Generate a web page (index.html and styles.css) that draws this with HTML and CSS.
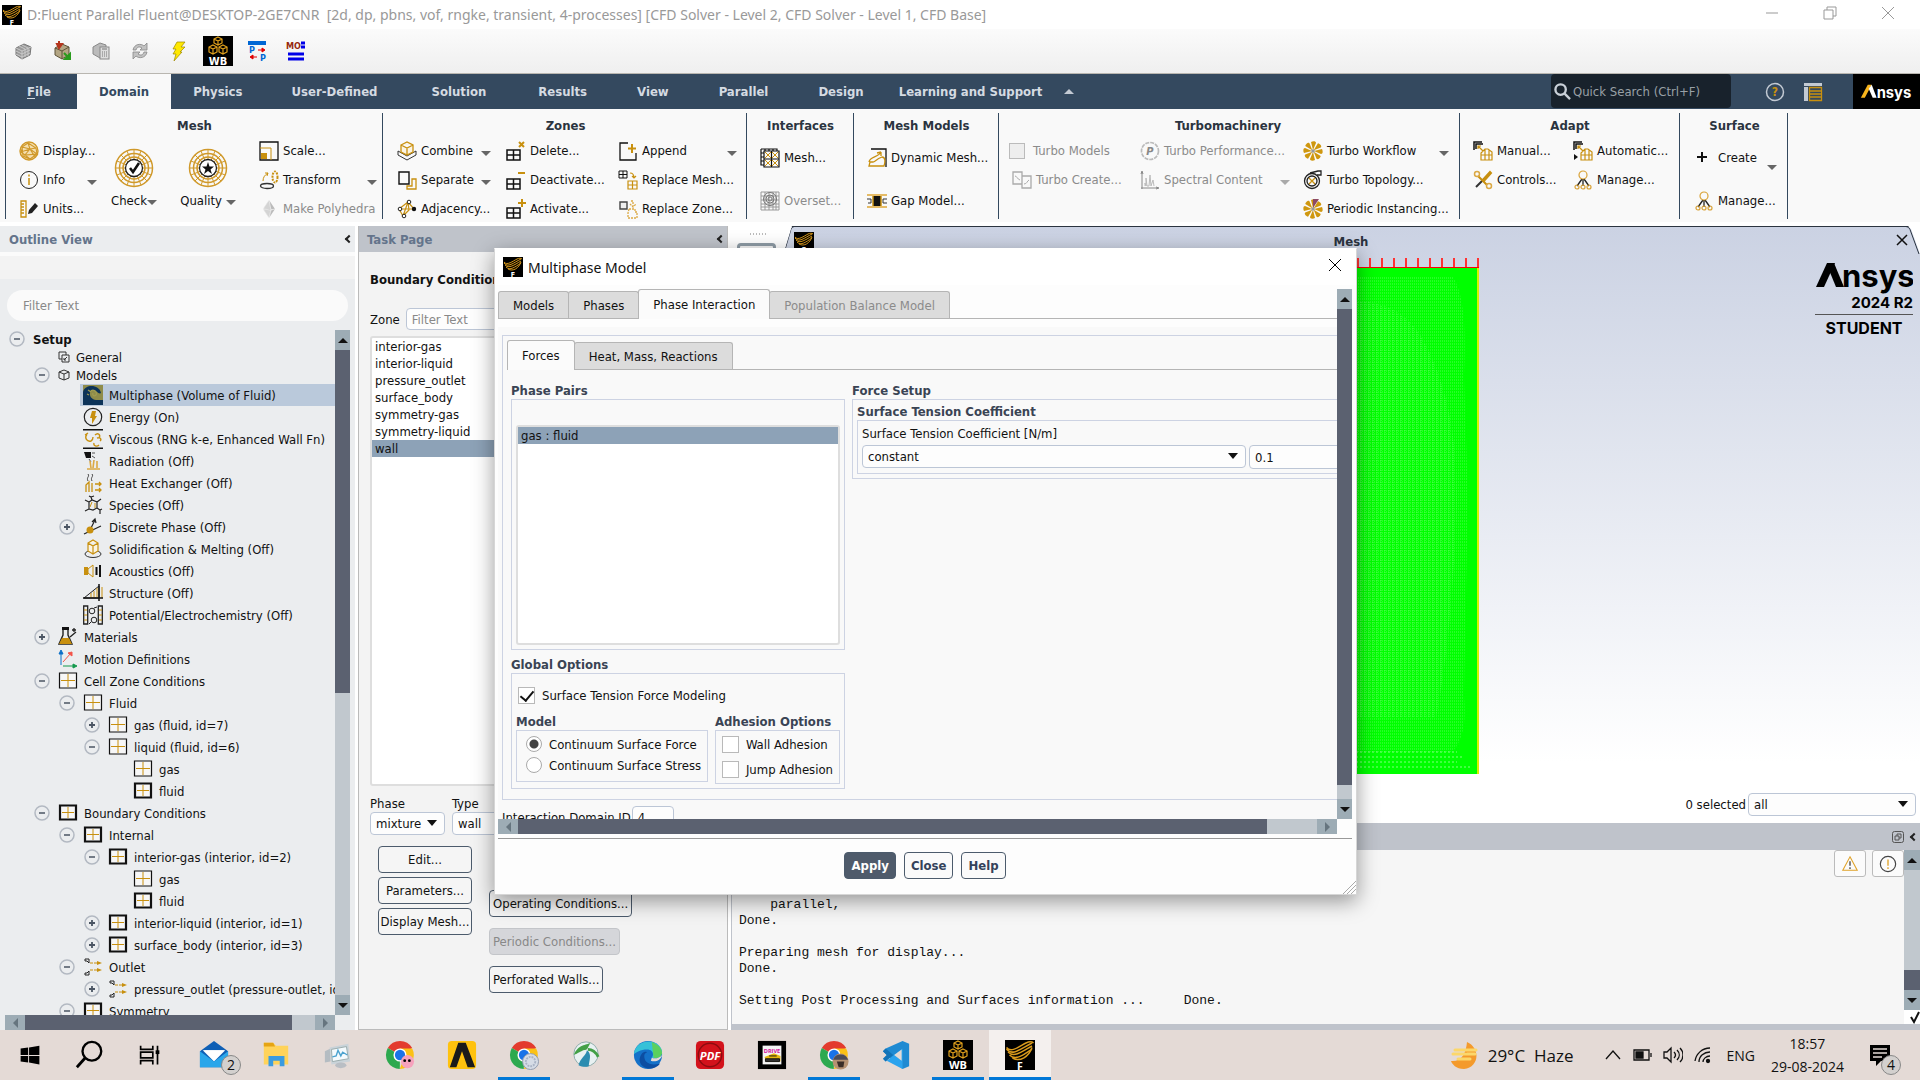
FILE: index.html
```html
<!DOCTYPE html>
<html lang="en">
<head>
  <meta charset="UTF-8">
  <meta name="viewport" content="width=device-width, initial-scale=1.0">
  <title>Fluent Parallel</title>
  <link rel="stylesheet" href="styles.css">
</head>
<body>
  <!-- icon sprite -->
  <svg class="sprite" aria-hidden="true">
    <symbol id="fluent" viewBox="0 0 20 20"><rect width="20" height="20" fill="#000"/><g fill="none" stroke="#d99a1c" stroke-width="1"><path d="M1 5c3 4 9-1 13-3 2-1 4-1 5 0"/><path d="M1 6c4 5 9 0 17-4"/><path d="M2 8c4 4 9 0 16-4"/><path d="M3 10c4 4 9 0 15-4"/><path d="M5 12c5 3 11-1 13-7"/></g><text x="10" y="20" font-size="7" font-weight="700" fill="#fff" text-anchor="middle">F</text></symbol>
    <symbol id="wb" viewBox="0 0 30 30"><rect width="30" height="30" fill="#000"/><g fill="none" stroke="#e0a01c" stroke-width="1.2"><path d="M15 1l4 2v4l-4 2-4-2V3zM11 3l4 2 4-2M15 5v4"/><path d="M10 9l4 2v5l-4 2-4-2v-5zM6 11l4 2 4-2M10 13v5"/><path d="M20 9l4 2v5l-4 2-4-2v-5zM16 11l4 2 4-2M20 13v5"/></g><text x="15" y="29" font-size="11" font-weight="700" fill="#fff" text-anchor="middle">WB</text></symbol>
    <symbol id="cube" viewBox="0 0 20 20"><path d="M3 7l8-4 7 3-1 8-8 4-6-4z" fill="#9a9a9a" stroke="#777"/><path d="M3 7l6 3 9-4M9 10v8M6 5l6 3v8M9 4l6 3v8M3 10l6 3 8-4M3 13l6 3 8-4" stroke="#c9c9c9" fill="none"/></symbol>
    <symbol id="cube-in" viewBox="0 0 20 20"><path d="M3 7l7-4 7 3v8l-7 4-7-4z" fill="#b3a583" stroke="#5d5339"/><path d="M3 7l7 3 7-4M10 10v8" stroke="#5d5339" fill="none"/><path d="M7 0v5M5 3l2 4 3-4z" stroke="#b5351d" stroke-width="2" fill="#b5351d"/><path d="M12 12l5 5M18 13v5h-5z" stroke="#299b1c" stroke-width="2" fill="#299b1c"/></symbol>
    <symbol id="cube-calc" viewBox="0 0 20 20"><path d="M2 6l7-4 6 2v9l-6 4-7-4z" fill="#bbb" stroke="#888"/><rect x="9" y="6" width="9" height="12" fill="#ddd" stroke="#888"/><path d="M11 8h5M11 11h1m1 0h1m1 0h1M11 13h1m1 0h1m1 0h1M11 15h1m1 0h1m1 0h1" stroke="#777"/></symbol>
    <symbol id="sync" viewBox="0 0 20 20"><path d="M3 9c1-6 8-7 11-4l3-3v7h-7l2-2c-3-2-5-1-6 2zM17 11c-1 6-8 7-11 4l-3 3v-7h7l-2 2c3 2 5 1 6-2z" fill="#c2c2c2" stroke="#888" stroke-width=".8"/></symbol>
    <symbol id="bolt" viewBox="0 0 20 20"><path d="M8 1h8l-4 5h4l-5 5h2l-8 9 2-7H4l3-5H4z" fill="#ffe800" stroke="#9b8700" stroke-width=".7"/></symbol>
    <symbol id="pp" viewBox="0 0 20 20"><rect x="1" y="0" width="18" height="4" fill="#0067d4"/><g fill="#0067d4" font-size="9" font-weight="700"><text x="2" y="12">P</text><text x="13" y="20">P</text></g><path d="M11 9h6M15 7l3 2-3 2zM10 16H4M6 14l-3 2 3 2z" stroke="#e00000" fill="#e00000"/></symbol>
    <symbol id="mo" viewBox="0 0 20 20"><text x="0" y="8" font-size="9" font-weight="700" fill="#96280c">MO</text><path d="M15 2h4M15 6h4M2 13h16M2 18h16" stroke="#0000e8" stroke-width="3"/></symbol>
    <symbol id="display" viewBox="0 0 20 20"><circle cx="10" cy="10" r="9" fill="#f4dfb0" stroke="#d0992a" stroke-width="1.4"/><path d="M3 6l6-4 8 5 1 6-7 5-7-3zM3 6l8 2 6-1M11 8l-5 6 5 4M11 8l7 5-12 1zM9 2l2 6M2 11l4 3M4 5l-2 6 9-3M16 16l-5-8" fill="none" stroke="#d0992a" stroke-width="1.1"/></symbol>
    <symbol id="info" viewBox="0 0 20 20"><circle cx="10" cy="10" r="8.5" fill="none" stroke="#222"/><path d="M10 8v7M10 4.500v2" stroke="#c8900f" stroke-width="1.500"/></symbol>
    <symbol id="units" viewBox="0 0 20 20"><path d="M2 2h5v16H2zM2 5h3M2 8h3M2 11h3M2 14h3" fill="none" stroke="#c8900f" stroke-width="1.300"/><path d="M9 15l1-4 6-7 3 3-6 7z" fill="#222"/></symbol>
    <symbol id="target" viewBox="0 0 40 40"><g fill="none" stroke="#d0992a" stroke-width="1.500"><circle cx="20" cy="20" r="18.500"/><circle cx="20" cy="20" r="14.500"/><circle cx="20" cy="20" r="11"/><path d="M20 1v38M1 20h38M7 7l26 26M33 7L7 33M13 3l14 34M27 3L13 37M3 13l34 14M3 27l34-14" stroke-width="1"/></g><circle cx="20" cy="20" r="8.500" fill="#fff" stroke="#222" stroke-width="1.300"/></symbol>
    <symbol id="scale" viewBox="0 0 20 20"><path d="M1 1h18v18H1z" fill="none" stroke="#111" stroke-width="1.300"/><path d="M1 7h11v12" fill="none" stroke="#c8900f"/><path d="M2 12h6v6H2z" fill="#c8900f"/></symbol>
    <symbol id="transform" viewBox="0 0 20 20"><ellipse cx="8" cy="16" rx="6.500" ry="2.500" fill="none" stroke="#333" stroke-width="1.300"/><path d="M4 11c0-4 2-6 5-8M9 3H6M9 3l-1 3" fill="none" stroke="#c8900f"/><ellipse cx="16" cy="7" rx="2.500" ry="5.500" fill="none" stroke="#c8900f" stroke-width="2" stroke-dasharray="2 1"/></symbol>
    <symbol id="poly" viewBox="0 0 20 20"><path d="M10 1l6 9-6 9-6-9z" fill="#bbb"/><path d="M10 1l2 10-2 8-6-9zM4 10l8 1 4-1" fill="#d4d4d4" stroke="#fff" stroke-width=".5"/></symbol>
    <symbol id="combine" viewBox="0 0 20 20"><path d="M1 10l9 5 9-5v4l-9 5-9-5z" fill="none" stroke="#333"/><path d="M4 4l6-3 6 3v7l-6 3-6-3zM4 4l6 3 6-3M10 7v7" fill="#fbf4e3" stroke="#c8900f" stroke-width="1.300"/></symbol>
    <symbol id="separate" viewBox="0 0 20 20"><path d="M2 2h10v12H2z" fill="none" stroke="#111" stroke-width="1.400"/><path d="M15 9h4v10h-9v-3h5z" fill="none" stroke="#c8900f" stroke-width="1.300"/></symbol>
    <symbol id="adjacency" viewBox="0 0 20 20"><path d="M2 10l9-7-5 14zM2 10h15l-6-7 1 8-6 6" fill="none" stroke="#c8900f" stroke-width="1.200"/><g fill="#fff" stroke="#222"><circle cx="12" cy="3" r="1.800"/><circle cx="3" cy="10" r="1.800"/><circle cx="7" cy="17" r="1.800"/></g><circle cx="17" cy="10" r="2.200" fill="#111"/></symbol>
    <symbol id="grid4" viewBox="0 0 20 20"><path d="M1 9h13v10H1zM7.500 9v10M1 14h13" fill="none" stroke="#111" stroke-width="1.500"/></symbol>
    <symbol id="append" viewBox="0 0 20 20"><path d="M10 2H2v17h16v-7" fill="none" stroke="#111" stroke-width="1.300"/><path d="M14 3v9M10 7.500h8" stroke="#c8900f" stroke-width="2"/></symbol>
    <symbol id="repmesh" viewBox="0 0 20 20"><path d="M1 1h8v7H1zM5 1v7M1 4.500h8" fill="none" stroke="#111"/><path d="M10 11h9v8h-9zM14.500 11v8M10 15h9M12 3c3 0 4 2 4 5M14 6l2 2 2-2" fill="none" stroke="#c8900f" stroke-width="1.200"/></symbol>
    <symbol id="repzone" viewBox="0 0 20 20"><path d="M2 3h7v7H2z" fill="#eee" stroke="#444" stroke-width="1.400"/><path d="M11 10h6v3h2v6h-9v-5zM13 2h2v5M12 5l3 3 3-3" fill="none" stroke="#dba944" stroke-width="1.300" stroke-dasharray="2 1"/></symbol>
    <symbol id="interf" viewBox="0 0 20 20"><path d="M4 3h15v16H4zM11.500 3v16M4 11h15M1 1h16v2M1 1v16h3M5 1v2M9 1v2M13 1v2M1 5h3M1 9h3M1 13h3" fill="none" stroke="#111" stroke-width="1.200"/><path d="M5 4l6 6M11 4l-6 6M12 4l6 6M18 4l-6 6M5 12l6 6M11 12l-6 6M12 12l6 6M18 12l-6 6" stroke="#c8900f"/></symbol>
    <symbol id="overset" viewBox="0 0 20 20"><path d="M1 1h18v18H1zM5 1v18M9 1v18M13 1v18M16 1v18M1 5h18M1 9h18M1 13h18M1 16h18" fill="none" stroke="#999"/><g fill="none" stroke="#777"><circle cx="10" cy="8" r="6.500"/><circle cx="10" cy="8" r="4"/><circle cx="10" cy="8" r="2"/></g></symbol>
    <symbol id="dynmesh" viewBox="0 0 20 20"><path d="M4 1h15v18" fill="none" stroke="#111" stroke-width="1.300"/><path d="M2 14c1-6 9-4 12-10M14 4l-4 1M14 4v4M3 14h3c2 0 3-3 9-5 4 0 3 6 2 9H2z" fill="none" stroke="#c8900f" stroke-width="1.300"/></symbol>
    <symbol id="gap" viewBox="0 0 20 20"><path d="M0 4h20M0 16h20" stroke="#e5bb66" stroke-width="2"/><path d="M6 5h8v10H6z" fill="#111"/><path d="M6 5v10M14 5v10" stroke="#c8900f" stroke-width="1.500"/><path d="M0 8h4v4H1M20 8h-4v4h4" fill="none" stroke="#333"/></symbol>
    <symbol id="tcreate" viewBox="0 0 20 20"><path d="M1 2h9v12H1zM10 6h9v12h-9z" fill="none" stroke="#aaa" stroke-width="1.300"/><path d="M3 6c2 0 2 3 5 4M12 14c3 0 3-3 5-4" fill="none" stroke="#aaa"/></symbol>
    <symbol id="perf" viewBox="0 0 20 20"><circle cx="10" cy="10" r="8.500" fill="none" stroke="#bbb" stroke-width="1.700" stroke-dasharray="4 1"/><text x="10" y="14" font-size="11" font-style="italic" font-weight="700" text-anchor="middle" fill="#888">P</text></symbol>
    <symbol id="spectral" viewBox="0 0 20 20"><path d="M2 19V2M1 4l1-3 1 3M1 18h17M16 17l3 1-3 1" fill="none" stroke="#888"/><path d="M5 16v-3l1 3V8l1 8h2l1-11 1 11 2-6 1 6" fill="none" stroke="#bbb"/></symbol>
    <symbol id="fan" viewBox="0 0 20 20"><g fill="#cf970f"><path d="M10 9L8 1c2-1 5-1 5 1z"/><path d="M10 9L8 1c2-1 5-1 5 1z" transform="rotate(45 10 10)"/><path d="M10 9L8 1c2-1 5-1 5 1z" transform="rotate(90 10 10)"/><path d="M10 9L8 1c2-1 5-1 5 1z" transform="rotate(135 10 10)"/><path d="M10 9L8 1c2-1 5-1 5 1z" transform="rotate(180 10 10)"/><path d="M10 9L8 1c2-1 5-1 5 1z" transform="rotate(225 10 10)"/><path d="M10 9L8 1c2-1 5-1 5 1z" transform="rotate(270 10 10)"/><path d="M10 9L8 1c2-1 5-1 5 1z" transform="rotate(315 10 10)"/></g><circle cx="10" cy="10" r="1.800" fill="#999"/></symbol>
    <symbol id="turbo" viewBox="0 0 20 20"><g fill="none" stroke="#222" stroke-width="1.300"><circle cx="9" cy="11" r="7.500"/><circle cx="9" cy="11" r="5"/><path d="M7 3l8-2h3v4h-4"/></g><path d="M6 8l6 6M12 8l-6 6" stroke="#c8900f" stroke-width="1.300"/></symbol>
    <symbol id="adapt" viewBox="0 0 20 20"><path d="M1 9V1h8M3 8V3h7" fill="none" stroke="#111" stroke-width="1.500"/><path d="M5 5l5 5M5 8V5h3M8 18v-6l4-4h3l4 3v8H8zM12 8v11M16 9v10M8 14h11" fill="none" stroke="#c8900f" stroke-width="1.200"/></symbol>
    <symbol id="controls" viewBox="0 0 20 20"><path d="M3 17L17 3" stroke="#333" stroke-width="2"/><path d="M9 11l8-9 1 1-8 9M5 6l9 9" fill="none" stroke="#c8900f" stroke-width="2"/><circle cx="4" cy="4" r="2.500" fill="none" stroke="#dba944" stroke-width="1.500"/><circle cx="16" cy="16" r="2.500" fill="none" stroke="#dba944" stroke-width="1.500"/></symbol>
    <symbol id="manage" viewBox="0 0 20 20"><path d="M9 9l-5 7M10 9v7M11 9l5 7" stroke="#222" stroke-width="1.300"/><g fill="none" stroke="#d9a237" stroke-width="1.200"><circle cx="10" cy="5" r="4"/><circle cx="4" cy="17" r="2"/><circle cx="10" cy="17" r="2"/><circle cx="16" cy="17" r="2"/></g></symbol>
    <symbol id="plus" viewBox="0 0 16 16"><circle cx="8" cy="8" r="7" fill="none" stroke="#b3b9c2" stroke-width="1.500"/><path d="M5 8h6M8 5v6" stroke="#4b5563" stroke-width="1.800"/></symbol>
    <symbol id="minus" viewBox="0 0 16 16"><circle cx="8" cy="8" r="7" fill="none" stroke="#b3b9c2" stroke-width="1.500"/><path d="M5 8h6" stroke="#4b5563" stroke-width="1.500"/></symbol>
    <symbol id="general" viewBox="0 0 12 12"><path d="M1 1h7v7H1z" fill="none" stroke="#333"/><path d="M4 4h7v7H4z" fill="#ebedef" stroke="#333"/><path d="M6 9l3-3M6 7v2h2" fill="none" stroke="#333"/></symbol>
    <symbol id="models" viewBox="0 0 12 12"><path d="M6 1l5 2v6l-5 2-5-2V3zM1 3l5 2 5-2M6 5v6" fill="none" stroke="#333"/></symbol>
    <symbol id="wave" viewBox="0 0 20 20"><rect width="20" height="20" fill="#8f8c4a"/><path d="M0 20V7C2-1 16-1 18 8c-2 2-5-3-8-3-5 1-4 9 3 10h7v5z" fill="#0c3358"/><path d="M7 7c3-4 8 0 6 3-2 2-4 0-3-2M5 5l3 2M4 9l2 1" fill="none" stroke="#a09c50" stroke-width="1.200"/></symbol>
    <symbol id="energy" viewBox="0 0 20 20"><circle cx="10" cy="10" r="8.700" fill="none" stroke="#222" stroke-width="1.200"/><path d="M9 4h4l-1 5h2l-5 8v-6H7z" fill="#c8900f"/></symbol>
    <symbol id="viscous" viewBox="0 0 20 20"><path d="M0 .7h20M0 19.300h20" stroke="#111" stroke-width="1.400"/><path d="M4 5c-3 4 0 8 4 7 2-1 2-2 2-4M2 6l3-2M12 6c3-3 6 0 4 3M14 9c3-1 5 1 3 3M11 14c-1 3 3 4 5 2" fill="none" stroke="#c8900f" stroke-width="1.400"/></symbol>
    <symbol id="radiation" viewBox="0 0 20 20"><path d="M1 1h7v6H3z" fill="#111"/><path d="M9 2h3M9 5l3 2M6 8l2 3" stroke="#555"/><path d="M7 10l1 7M11 9l-1 8M14 10v7M4 18h13" stroke="#dba944" stroke-width="1.600"/></symbol>
    <symbol id="heatex" viewBox="0 0 20 20"><path d="M5 1c2 3-2 3 0 7M9 1c2 3-2 3 0 7" fill="none" stroke="#444"/><path d="M3 19v-7l3-3v10M9 19v-9M12 11h6M16 9l2 2-2 2M12 17h6M16 15l2 2-2 2" fill="none" stroke="#c8900f" stroke-width="1.300"/></symbol>
    <symbol id="species" viewBox="0 0 20 20"><path d="M2 5l4 2v7l-4 2M6 7l3-2 5 2v6l-4 2-4-1M9 5L8 2 6 1M8 2l3-1M14 7l4-3M14 13l3 2v4M17 15l2-1" fill="none" stroke="#222" stroke-width="1.200"/><path d="M7 12l2-5M12 13V8" stroke="#c8900f"/></symbol>
    <symbol id="discrete" viewBox="0 0 20 20"><path d="M1 17L18 9M7 13l5-10M9 5l3-3 1 4" fill="none" stroke="#222" stroke-width="1.200"/><circle cx="7" cy="13" r="3.500" fill="#c8900f"/></symbol>
    <symbol id="solid" viewBox="0 0 20 20"><ellipse cx="10" cy="15" rx="8" ry="3.500" fill="none" stroke="#333"/><path d="M5 4l5-3 5 3v8l-5 3-5-3zM5 4l5 3 5-3M10 7v8" fill="#fbf4e3" stroke="#c8900f" stroke-width="1.200"/></symbol>
    <symbol id="acoustics" viewBox="0 0 20 20"><path d="M1 6h4v8H1z" fill="#c8900f"/><path d="M5 8l5-4v12l-5-4z" fill="none" stroke="#c8900f"/><path d="M13.500 6v8M17 4v12" stroke="#111" stroke-width="2"/></symbol>
    <symbol id="structure" viewBox="0 0 20 20"><path d="M1 15L16 3v12z" fill="none" stroke="#222"/><path d="M8 10v5M11 8v7M14 5v10M19 4v11" stroke="#c8900f"/><path d="M16 1v17M0 15h20" stroke="#111" stroke-width="1.500"/></symbol>
    <symbol id="potential" viewBox="0 0 20 20"><path d="M.7 1h4v18h-4zM15.300 1h4v18h-4z" fill="none" stroke="#222" stroke-width="1.300"/><path d="M1 5h3M1 10h3M1 15h3M16 5h3M16 10h3M16 15h3" stroke="#c8900f"/><circle cx="9" cy="6" r="2.800" fill="none" stroke="#222"/><circle cx="11" cy="15" r="2.800" fill="none" stroke="#222"/><path d="M11 3l3-1M8 17l-2 2" stroke="#222"/></symbol>
    <symbol id="materials" viewBox="0 0 20 20"><path d="M5 1h5v7l4 9H1l4-9z" fill="none" stroke="#222" stroke-width="1.400"/><path d="M4 11h7l3 6H1z" fill="#c8900f"/><path d="M4 0h7v3H4z" fill="#111"/><path d="M12 10l6-5M16 1v4M14 3h4" stroke="#222" stroke-width="1.300"/></symbol>
    <symbol id="motion" viewBox="0 0 20 20"><path d="M3 16V3M1 5l2-4 2 4z" stroke="#0a70c8" fill="#0a70c8"/><path d="M5 17h12M15 15l4 2-4 2z" stroke="#12994c" fill="#12994c"/><path d="M5 13l8-9M10 4l4-1v4z" stroke="#f3554a" fill="#f3554a"/></symbol>
    <symbol id="cell" viewBox="0 0 20 20"><path d="M1.500 2h17v15h-17z" fill="#f7f7f7" stroke="#111" stroke-width="1.200"/><path d="M10 3v13M3 9.500h14" stroke="#c8900f"/></symbol>
    <symbol id="bound" viewBox="0 0 20 20"><path d="M2 2.500h16v14H2z" fill="#f7f7f7" stroke="#111" stroke-width="2.200"/><path d="M10 4v11M4 9.500h12" stroke="#c8900f"/></symbol>
    <symbol id="outlet" viewBox="0 0 20 20"><path d="M2 2h4v4L4 4H2zM2 18h4v-4l-2 2H2z" fill="none" stroke="#222"/><path d="M7 6h8M7 13h8" stroke="#c8900f" stroke-dasharray="3 1"/><path d="M14 4l5 2-5 2zM14 11l5 2-5 2z" fill="#c8900f"/></symbol>
    <symbol id="chrome" viewBox="0 0 32 32"><path d="M16 16L3 8.500a15 15 0 0 1 26 0z" fill="#e33b2e"/><path d="M16 16L15.800 31A15 15 0 0 1 3 8.500z" fill="#2da94f"/><path d="M16 9h13a15 15 0 0 1-13.200 22l4-11z" fill="#fbc116"/><circle cx="16" cy="16" r="7" fill="#fff"/><circle cx="16" cy="16" r="5.500" fill="#1a73e8"/></symbol>
  </svg>

  <header class="titlebar">
    <svg class="i20"><use href="#fluent"/></svg>
    <h1>D:Fluent Parallel Fluent@DESKTOP-2GE7CNR&nbsp; [2d, dp, pbns, vof, rngke, transient, 4-processes] [CFD Solver - Level 2, CFD Solver - Level 1, CFD Base]</h1>
    <div class="window-buttons">
      <button aria-label="Minimize"><svg viewBox="0 0 14 14"><path d="M1 7h12"/></svg></button>
      <button aria-label="Restore"><svg viewBox="0 0 14 14"><path d="M1 4h9v9H1zM4 4V1h9v9h-3"/></svg></button>
      <button aria-label="Close"><svg viewBox="0 0 14 14"><path d="M1 1l12 12M13 1L1 13"/></svg></button>
    </div>
  </header>

  <div class="toolbar">
    <button aria-label="Read"><svg class="i20"><use href="#cube"/></svg></button>
    <button aria-label="Write"><svg class="i20"><use href="#cube-in"/></svg></button>
    <button aria-label="Calculate"><svg class="i20"><use href="#cube-calc"/></svg></button>
    <button aria-label="Refresh"><svg class="i20"><use href="#sync"/></svg></button>
    <button aria-label="Update"><svg class="i20"><use href="#bolt"/></svg></button>
    <button aria-label="Workbench"><svg class="i30"><use href="#wb"/></svg></button>
    <button aria-label="Parameters"><svg class="i20"><use href="#pp"/></svg></button>
    <button aria-label="Monitors"><svg class="i20"><use href="#mo"/></svg></button>
  </div>

  <nav class="menu">
    <a href="#" class="menu-tab"><u>F</u>ile</a>
    <a href="#" class="menu-tab snug active">Domain</a>
    <a href="#" class="menu-tab snug">Physics</a>
    <a href="#" class="menu-tab wide">User-Defined</a>
    <a href="#" class="menu-tab wide">Solution</a>
    <a href="#" class="menu-tab">Results</a>
    <a href="#" class="menu-tab">View</a>
    <a href="#" class="menu-tab">Parallel</a>
    <a href="#" class="menu-tab">Design</a>
    <a href="#" class="menu-tab narrow">Learning and Support</a>
    <button class="collapse" aria-label="Collapse ribbon"></button>
    <div class="menu-right">
      <label class="search">
        <svg viewBox="0 0 18 18"><circle cx="7" cy="7" r="5.500"/><path d="M11 11l6 6"/></svg>
        <input type="text" placeholder="Quick Search (Ctrl+F)">
      </label>
      <button aria-label="Help"><svg class="i20" viewBox="0 0 20 20"><circle cx="10" cy="10" r="8.500" fill="none" stroke="#c3cad3" stroke-width="1.500"/><text x="10" y="14" font-size="12" font-weight="700" text-anchor="middle" fill="#c8900f">?</text></svg></button>
      <button aria-label="Layout"><svg class="i20" viewBox="0 0 20 20"><path d="M1 1h18v3H1zM1 5h4v14H1z" fill="#c3cad3"/><path d="M6.500 5.500h12v13h-12zM6.500 9h12M6.500 12h12M6.500 15h12" fill="none" stroke="#c8900f" stroke-width="1.300"/></svg></button>
      <div class="brand">
        <svg viewBox="0 0 68 36"><path d="M8 24l7-13h4l-7 13z" fill="#f8b41c"/><path d="M16 15l3-4 5 13h-4z" fill="#fff"/><text x="24" y="24" font-size="15" font-weight="700" fill="#fff">nsys</text></svg>
      </div>
    </div>
  </nav>

  <section class="ribbon">
    <div class="group mesh">
      <h2>Mesh</h2>
      <div class="cols">
        <div class="col c-info">
          <button class="tool"><svg class="i20"><use href="#display"/></svg>Display...</button>
          <button class="tool"><svg class="i20"><use href="#info"/></svg>Info<i class="caret"></i></button>
          <button class="tool"><svg class="i20"><use href="#units"/></svg>Units...</button>
        </div>
        <button class="big-tool"><svg viewBox="0 0 40 40"><use href="#target"/><path d="M16 20l3 4 6-9" fill="none" stroke="#111" stroke-width="2.500"/></svg><span>Check<i class="caret"></i></span></button>
        <button class="big-tool"><svg viewBox="0 0 40 40"><use href="#target"/><path d="M20 14l1.500 4.500H26l-3.500 3 1.500 4.500-4-3-4 3 1.500-4.500-3.500-3h4.500z" fill="#111"/></svg><span>Quality <i class="caret"></i></span></button>
        <div class="col c-scale">
          <button class="tool"><svg class="i20"><use href="#scale"/></svg>Scale...</button>
          <button class="tool"><svg class="i20"><use href="#transform"/></svg>Transform<i class="caret"></i></button>
          <button class="tool" disabled><svg class="i20"><use href="#poly"/></svg>Make Polyhedra</button>
        </div>
      </div>
    </div>
    <div class="group zones">
      <h2>Zones</h2>
      <div class="cols">
        <div class="col c-combine">
          <button class="tool"><svg class="i20"><use href="#combine"/></svg>Combine<i class="caret"></i></button>
          <button class="tool"><svg class="i20"><use href="#separate"/></svg>Separate<i class="caret"></i></button>
          <button class="tool"><svg class="i20"><use href="#adjacency"/></svg>Adjacency...</button>
        </div>
        <div class="col c-delete">
          <button class="tool"><svg class="i20" viewBox="0 0 20 20"><use href="#grid4"/><path d="M13 1l5 5M18 1l-5 5" stroke="#c8900f" stroke-width="2"/></svg>Delete...</button>
          <button class="tool"><svg class="i20" viewBox="0 0 20 20"><use href="#grid4"/><path d="M12 3h7" stroke="#c8900f" stroke-width="2"/></svg>Deactivate...</button>
          <button class="tool"><svg class="i20" viewBox="0 0 20 20"><use href="#grid4"/><path d="M12 4h8M16 0v8" stroke="#c8900f" stroke-width="2"/></svg>Activate...</button>
        </div>
        <div class="col c-append">
          <button class="tool"><svg class="i20"><use href="#append"/></svg>Append<i class="caret"></i></button>
          <button class="tool"><svg class="i20"><use href="#repmesh"/></svg>Replace Mesh...</button>
          <button class="tool"><svg class="i20"><use href="#repzone"/></svg>Replace Zone...</button>
        </div>
      </div>
    </div>
    <div class="group interfaces">
      <h2>Interfaces</h2>
      <div class="col two">
        <button class="tool"><svg class="i20"><use href="#interf"/></svg>Mesh...</button>
        <button class="tool" disabled><svg class="i20"><use href="#overset"/></svg>Overset...</button>
      </div>
    </div>
    <div class="group mesh-models">
      <h2>Mesh Models</h2>
      <div class="col two">
        <button class="tool"><svg class="i20"><use href="#dynmesh"/></svg>Dynamic Mesh...</button>
        <button class="tool"><svg class="i20"><use href="#gap"/></svg>Gap Model...</button>
      </div>
    </div>
    <div class="group turbomachinery">
      <h2>Turbomachinery</h2>
      <div class="cols">
        <div class="col c-turbo">
          <label class="tool off"><input type="checkbox" class="square" disabled>Turbo Models</label>
          <button class="tool indent" disabled><svg class="i20"><use href="#tcreate"/></svg>Turbo Create...</button>
        </div>
        <div class="col c-perf">
          <button class="tool" disabled><svg class="i20"><use href="#perf"/></svg>Turbo Performance...</button>
          <button class="tool" disabled><svg class="i20"><use href="#spectral"/></svg>Spectral Content<i class="caret"></i></button>
        </div>
        <div class="col c-flow">
          <button class="tool"><svg class="i20"><use href="#fan"/></svg>Turbo Workflow<i class="caret"></i></button>
          <button class="tool"><svg class="i20"><use href="#turbo"/></svg>Turbo Topology...</button>
          <button class="tool"><svg class="i20" viewBox="0 0 20 20"><use href="#fan"/><path d="M10 9V0h6z" fill="#8c4a64"/></svg>Periodic Instancing...</button>
        </div>
      </div>
    </div>
    <div class="group adapt">
      <h2>Adapt</h2>
      <div class="cols">
        <div class="col c-manual">
          <button class="tool"><svg class="i20"><use href="#adapt"/></svg>Manual...</button>
          <button class="tool"><svg class="i20"><use href="#controls"/></svg>Controls...</button>
        </div>
        <div class="col">
          <button class="tool"><svg class="i20" viewBox="0 0 20 20"><use href="#adapt"/><path d="M1 13l4 3-4 3z" fill="#111"/></svg>Automatic...</button>
          <button class="tool"><svg class="i20"><use href="#manage"/></svg>Manage...</button>
        </div>
      </div>
    </div>
    <div class="group surface">
      <h2>Surface</h2>
      <div class="col two">
        <button class="tool"><svg class="i20" viewBox="0 0 20 20"><path d="M8 4v10M3 9h10" stroke="#111" stroke-width="2"/></svg>Create<i class="caret low"></i></button>
        <button class="tool"><svg class="i20"><use href="#manage"/></svg>Manage...</button>
      </div>
    </div>
  </section>

  <main class="workspace">
    <aside class="outline">
      <header class="pane-head"><h2>Outline View</h2><button class="fold" aria-label="Hide outline"></button></header>
      <div class="strip"></div>
      <input class="filter" type="text" placeholder="Filter Text" aria-label="Filter outline">
      <div class="tree-wrap">
        <ul class="tree">
          <li class="l1 short"><svg class="exp"><use href="#minus"/></svg><span><b>Setup</b></span></li>
          <li class="l2 short"><i class="exp"></i><span><svg class="i12"><use href="#general"/></svg>General</span></li>
          <li class="l2 short"><svg class="exp"><use href="#minus"/></svg><span><svg class="i12"><use href="#models"/></svg>Models</span></li>
          <li class="l3 selected"><i class="exp"></i><span><svg class="i20"><use href="#wave"/></svg>Multiphase (Volume of Fluid)</span></li>
          <li class="l3"><i class="exp"></i><span><svg class="i20"><use href="#energy"/></svg>Energy (On)</span></li>
          <li class="l3"><i class="exp"></i><span><svg class="i20"><use href="#viscous"/></svg>Viscous (RNG k-e, Enhanced Wall Fn)</span></li>
          <li class="l3"><i class="exp"></i><span><svg class="i20"><use href="#radiation"/></svg>Radiation (Off)</span></li>
          <li class="l3"><i class="exp"></i><span><svg class="i20"><use href="#heatex"/></svg>Heat Exchanger (Off)</span></li>
          <li class="l3"><i class="exp"></i><span><svg class="i20"><use href="#species"/></svg>Species (Off)</span></li>
          <li class="l3"><svg class="exp"><use href="#plus"/></svg><span><svg class="i20"><use href="#discrete"/></svg>Discrete Phase (Off)</span></li>
          <li class="l3"><i class="exp"></i><span><svg class="i20"><use href="#solid"/></svg>Solidification &amp; Melting (Off)</span></li>
          <li class="l3"><i class="exp"></i><span><svg class="i20"><use href="#acoustics"/></svg>Acoustics (Off)</span></li>
          <li class="l3"><i class="exp"></i><span><svg class="i20"><use href="#structure"/></svg>Structure (Off)</span></li>
          <li class="l3"><i class="exp"></i><span><svg class="i20"><use href="#potential"/></svg>Potential/Electrochemistry (Off)</span></li>
          <li class="l2"><svg class="exp"><use href="#plus"/></svg><span><svg class="i20"><use href="#materials"/></svg>Materials</span></li>
          <li class="l2"><i class="exp"></i><span><svg class="i20"><use href="#motion"/></svg>Motion Definitions</span></li>
          <li class="l2"><svg class="exp"><use href="#minus"/></svg><span><svg class="i20"><use href="#cell"/></svg>Cell Zone Conditions</span></li>
          <li class="l3"><svg class="exp"><use href="#minus"/></svg><span><svg class="i20"><use href="#cell"/></svg>Fluid</span></li>
          <li class="l4"><svg class="exp"><use href="#plus"/></svg><span><svg class="i20"><use href="#cell"/></svg>gas (fluid, id=7)</span></li>
          <li class="l4"><svg class="exp"><use href="#minus"/></svg><span><svg class="i20"><use href="#cell"/></svg>liquid (fluid, id=6)</span></li>
          <li class="l5"><i class="exp"></i><span><svg class="i20"><use href="#cell"/></svg>gas</span></li>
          <li class="l5"><i class="exp"></i><span><svg class="i20"><use href="#bound"/></svg>fluid</span></li>
          <li class="l2"><svg class="exp"><use href="#minus"/></svg><span><svg class="i20"><use href="#bound"/></svg>Boundary Conditions</span></li>
          <li class="l3"><svg class="exp"><use href="#minus"/></svg><span><svg class="i20"><use href="#bound"/></svg>Internal</span></li>
          <li class="l4"><svg class="exp"><use href="#minus"/></svg><span><svg class="i20"><use href="#bound"/></svg>interior-gas (interior, id=2)</span></li>
          <li class="l5"><i class="exp"></i><span><svg class="i20"><use href="#cell"/></svg>gas</span></li>
          <li class="l5"><i class="exp"></i><span><svg class="i20"><use href="#bound"/></svg>fluid</span></li>
          <li class="l4"><svg class="exp"><use href="#plus"/></svg><span><svg class="i20"><use href="#bound"/></svg>interior-liquid (interior, id=1)</span></li>
          <li class="l4"><svg class="exp"><use href="#plus"/></svg><span><svg class="i20"><use href="#bound"/></svg>surface_body (interior, id=3)</span></li>
          <li class="l3"><svg class="exp"><use href="#minus"/></svg><span><svg class="i20"><use href="#outlet"/></svg>Outlet</span></li>
          <li class="l4"><svg class="exp"><use href="#plus"/></svg><span><svg class="i20"><use href="#outlet"/></svg>pressure_outlet (pressure-outlet, id=9)</span></li>
          <li class="l3"><svg class="exp"><use href="#minus"/></svg><span><svg class="i20"><use href="#bound"/></svg>Symmetry</span></li>
        </ul>
        <div class="vbar"><button class="up" aria-label="Scroll up"></button><div class="thumb tree-thumb"></div><button class="down" aria-label="Scroll down"></button></div>
        <div class="hbar"><button class="left" aria-label="Scroll left"></button><div class="thumb tree-hthumb"></div><button class="right" aria-label="Scroll right"></button></div>
      </div>
    </aside>

    <section class="task">
      <header class="pane-head"><h2>Task Page</h2><button class="fold" aria-label="Hide task page"></button></header>
      <div class="task-body">
        <h3>Boundary Conditions</h3>
        <div class="zone-row"><label for="zone">Zone</label><input id="zone" type="text" placeholder="Filter Text"></div>
        <ul class="listbox zone-list">
          <li>interior-gas</li>
          <li>interior-liquid</li>
          <li>pressure_outlet</li>
          <li>surface_body</li>
          <li>symmetry-gas</li>
          <li>symmetry-liquid</li>
          <li class="picked">wall</li>
        </ul>
        <div class="pickers">
          <label class="phase">Phase<span class="drop"><select><option>mixture</option></select></span></label>
          <label class="type">Type<span class="drop"><select><option>wall</option></select></span></label>
        </div>
        <div class="task-buttons">
          <div class="btn-left">
            <button class="btn">Edit...</button>
            <button class="btn">Parameters...</button>
            <button class="btn">Display Mesh...</button>
          </div>
          <div class="btn-right">
            <button class="btn">Operating Conditions...</button>
            <button class="btn" disabled>Periodic Conditions...</button>
            <button class="btn">Perforated Walls...</button>
          </div>
        </div>
      </div>
    </section>

    <section class="right">
      <div class="view">
        <div class="view-tools"><div class="grip"></div><button aria-label="Fit view"></button></div>
        <div class="canvas">
          <svg class="corner-left" viewBox="0 0 12 28"><path d="M0 27L7 3q1-2 3-2.500h2"/></svg>
          <svg class="corner-right" viewBox="0 0 14 28"><path d="M0 .5q3 0 4 3L13 28"/></svg>
          <header><svg class="i20"><use href="#fluent"/></svg><h2>Mesh</h2><button aria-label="Close view"><svg viewBox="0 0 12 12"><path d="M1 1l10 10M11 1L1 11"/></svg></button></header>
          <div class="plot">
            <div class="ticks"></div>
            <svg class="mesh-body" viewBox="0 0 247 506" preserveAspectRatio="none">
              <defs>
                <pattern id="rows" width="2" height="3" patternUnits="userSpaceOnUse"><path d="M0 1h1" stroke="#7dff7d"/></pattern>
                <pattern id="cols" width="4" height="2" patternUnits="userSpaceOnUse"><path d="M1 0v1" stroke="#8dff8d"/></pattern>
              </defs>
              <rect width="247" height="506" fill="#0f0"/>
              <path d="M0 8h220q16 20 12 100l4 120-4 200q4 40-12 56H0z" fill="url(#rows)" opacity=".6"/>
              <path d="M0 60q150-60 190 10t34 190-20 190H0z" fill="url(#cols)" opacity=".6"/>
              <path d="M0 484h225M0 489h230M0 494h225M0 499h240" stroke="#a0ffa0" stroke-dasharray="2 2" opacity=".8"/>
              <path d="M246 0v506" stroke="#d8f000" stroke-width="2"/>
            </svg>
          </div>
          <div class="logo">
            <svg viewBox="0 0 98 32"><path d="M1 25L12 1h8L9 25z"/><path d="M14 8l5-7 10 24h-8z"/><text x="27" y="25" font-size="31" font-weight="700">nsys</text></svg>
            <strong>2024 R2</strong>
            <em>STUDENT</em>
          </div>
        </div>
      </div>
      <div class="selected-row"><label for="sel">0 selected</label><span class="drop"><select id="sel"><option>all</option></select></span></div>
      <div class="console-head">
        <svg viewBox="0 0 12 12"><rect x=".5" y=".5" width="11" height="11" rx="2"/><path d="M3 5h4v4H3zM5 5V3h4v4H7"/></svg>
        <button class="fold" aria-label="Hide console"></button>
      </div>
      <div class="console">
<pre>    parallel,
Done.

Preparing mesh for display...
Done.

Setting Post Processing and Surfaces information ...     Done.</pre>
        <div class="console-buttons">
          <button aria-label="Warnings"><svg viewBox="0 0 20 20"><path d="M10 2l8 15H2z" fill="none" stroke="#e0a32a" stroke-width="1.200"/><path d="M10 7v5M10 13.500v2" stroke="#666" stroke-width="1.800"/></svg></button>
          <button aria-label="Messages"><svg viewBox="0 0 20 20"><circle cx="10" cy="10" r="8.500" fill="none" stroke="#444" stroke-width="1.300"/><path d="M10 5v7M10 13.500v2" stroke="#e0a32a" stroke-width="1.500"/></svg></button>
        </div>
        <div class="console-side">
          <div class="vbar"><button class="up" aria-label="Scroll up"></button><div class="track"></div><div class="thumb console-thumb"></div><button class="down" aria-label="Scroll down"></button></div>
          <svg class="tick" viewBox="0 0 16 14"><path d="M7 7l3 5 5-10"/></svg>
        </div>
      </div>
    </section>

    <div class="dialog" role="dialog" aria-labelledby="dialog-title">
      <header>
        <svg class="i20"><use href="#fluent"/></svg>
        <h2 id="dialog-title">Multiphase Model</h2>
        <button aria-label="Close dialog"><svg viewBox="0 0 14 14"><path d="M1 1l12 12M13 1L1 13"/></svg></button>
      </header>
      <div class="dialog-scroll">
        <div class="viewport">
          <div class="tabs">
            <button>Models</button>
            <button>Phases</button>
            <button class="on">Phase Interaction</button>
            <button disabled>Population Balance Model</button>
          </div>
          <div class="pane">
            <div class="frame">
              <div class="tabs">
                <button class="on">Forces</button>
                <button>Heat, Mass, Reactions</button>
              </div>
              <div class="split">
                <div class="left-col">
                  <h3>Phase Pairs</h3>
                  <div class="box pairs"><ul class="listbox"><li class="picked">gas : fluid</li></ul></div>
                  <h3>Global Options</h3>
                  <div class="box options">
                    <label class="check"><input type="checkbox" class="box-input" checked>Surface Tension Force Modeling</label>
                    <div class="option-groups">
                      <div class="option-group">
                        <h3>Model</h3>
                        <div class="box radios">
                          <label><input type="radio" name="model" checked>Continuum Surface Force</label>
                          <label><input type="radio" name="model">Continuum Surface Stress</label>
                        </div>
                      </div>
                      <div>
                        <h3>Adhesion Options</h3>
                        <div class="box adhesion">
                          <label class="check"><input type="checkbox" class="box-input">Wall Adhesion</label>
                          <label class="check"><input type="checkbox" class="box-input">Jump Adhesion</label>
                        </div>
                      </div>
                    </div>
                  </div>
                </div>
                <div class="right-col">
                  <h3>Force Setup</h3>
                  <div class="box force">
                    <h3>Surface Tension Coefficient</h3>
                    <div class="box coef">
                      <label for="coef">Surface Tension Coefficient [N/m]</label>
                      <div class="coef-row">
                        <span class="drop"><select id="coef"><option>constant</option></select></span>
                        <input type="text" value="0.1" aria-label="Coefficient value">
                      </div>
                    </div>
                  </div>
                </div>
              </div>
            </div>
            <div class="domain-id"><label for="domain">Interaction Domain ID</label><input id="domain" type="text" value="4"></div>
          </div>
        </div>
        <div class="vbar"><button class="up" aria-label="Scroll up"></button><div class="thumb dialog-thumb"></div><div class="track"></div><button class="down" aria-label="Scroll down"></button></div>
        <div class="hbar"><button class="left" aria-label="Scroll left"></button><div class="thumb dialog-hthumb"></div><div class="track"></div><button class="right" aria-label="Scroll right"></button></div>
      </div>
      <footer>
        <button class="btn primary">Apply</button>
        <button class="btn">Close</button>
        <button class="btn">Help</button>
        <svg class="resize" viewBox="0 0 14 14"><path d="M1 14L14 1M5 14l9-9M9 14l5-5"/></svg>
      </footer>
    </div>
  </main>

  <footer class="taskbar">
    <div class="apps system">
      <button aria-label="Start"><svg viewBox="0 0 32 32"><path d="M6 9l8-1v8H6zM15 8l11-2v10H15zM6 17h8v7l-8-1zM15 17h11v9l-11-2z" fill="#000"/></svg></button>
      <button aria-label="Search"><svg viewBox="0 0 32 32"><circle cx="18" cy="12" r="10" fill="none" stroke="#000" stroke-width="2.500"/><path d="M11 19L2 29" stroke="#000" stroke-width="3"/></svg></button>
      <button aria-label="Task view"><svg viewBox="0 0 32 32"><path d="M6 6v4h13V6M6 26v-4h13v4M6 13h13v6H6zM24 6v20" fill="none" stroke="#000" stroke-width="1.800"/><path d="M22 11h4v4h-4z" fill="#000"/></svg></button>
    </div>
    <div class="apps">
      <button aria-label="Mail"><svg viewBox="0 0 32 32"><path d="M1 12L16 1l15 11v17H1z" fill="#0f5fb5"/><path d="M4 11h24l-12 12z" fill="#fff"/><path d="M1 12l15 11 15-11v17H1z" fill="#2aa6ea"/><path d="M5 11h22L16 20z" fill="#fff"/></svg><span class="badge">2</span></button>
      <button aria-label="Files"><svg viewBox="0 0 32 32"><path d="M3 3h10l3 3h13v20H3z" fill="#ffd35a"/><path d="M3 3h10l2 4H3z" fill="#e5a414"/><path d="M8 28V17h17v11h-5v-6h-7v6z" fill="#3a9be0"/></svg></button>
      <button aria-label="Monitor"><svg viewBox="0 0 32 32"><path d="M2 12l6-3v14l-6 1z" fill="#b4bcc2"/><path d="M7 8l20-4 2 19-20 3z" fill="#c9d3d9"/><path d="M9 10l16-3 2 13-17 3z" fill="#f4fafd" stroke="#9aa"/><path d="M10 18l4-1 2-6 3 6 2-4 5 3" fill="none" stroke="#4aa2cf" stroke-width="1.500"/><ellipse cx="19" cy="27" rx="6" ry="3" fill="#b9bec4"/></svg></button>
      <button aria-label="Chrome"><svg viewBox="0 0 32 32"><use href="#chrome"/><circle cx="24" cy="23" r="7" fill="#f6a2bd"/><circle cx="21" cy="22" r="1.500"/><circle cx="26" cy="22" r="1.500"/></svg></button>
      <button aria-label="Ansys"><svg viewBox="0 0 32 32"><rect x="1" y="1" width="30" height="30" rx="4" fill="#ffc20e"/><path d="M3 29L12 3h8l10 26h-8L16 12l-6 17z" fill="#1a1a1a"/></svg></button>
      <button aria-label="Chrome" class="open"><svg viewBox="0 0 32 32"><use href="#chrome"/><circle cx="23" cy="23" r="8.500" fill="#d6dce6" stroke="#8e99ab"/><circle cx="23" cy="23" r="5" fill="none" stroke="#aab4c6" stroke-dasharray="2 1" stroke-width="2"/></svg></button>
      <button aria-label="Globe"><svg viewBox="0 0 32 32"><circle cx="16" cy="15" r="13" fill="#e8f1f2" stroke="#8ca9a9"/><path d="M3 16c5-12 13-10 18-13-4 5-2 8-8 8-4 2-5 3-10 5z" fill="#43a047"/><path d="M8 27c2-8 8-10 9-16 6 4 2 12 2 17-3 1-7 1-11-1z" fill="#2b8cb0"/><path d="M18 10c6 0 9 4 11 8" stroke="#43a047" stroke-width="3" fill="none"/></svg></button>
      <button aria-label="Edge" class="open"><svg viewBox="0 0 32 32"><circle cx="16" cy="16" r="15" fill="#1471c9"/><path d="M1 15C3-3 29-2 31 12c0 6-5 8-11 7 3-4 1-9-5-9-7 0-12 3-14 5z" fill="#35c1d8"/><path d="M20 2c8 3 11 8 11 12-1 4-4 6-9 5z" fill="#5bd05e"/><path d="M12 17c0 7 6 11 17 8-6 8-20 7-22-3 0-6 4-11 8-9-2 1-3 2-3 4z" fill="#0c4ea2"/><path d="M20 19c3 1 8 1 11-3-1 6-8 8-12 6z" fill="#e4dad6"/></svg></button>
      <button aria-label="PDF"><svg viewBox="0 0 32 32"><rect x="1" y="1" width="30" height="30" rx="5" fill="#d3121c"/><circle cx="16" cy="16" r="12.500" fill="none" stroke="#8d0b10" stroke-width="1.500"/><text x="16" y="21" font-size="12" font-weight="700" font-style="italic" fill="#fff" text-anchor="middle">PDF</text></svg></button>
      <button aria-label="Game"><svg viewBox="0 0 32 32"><rect x="1" y="1" width="30" height="30" fill="#000"/><rect x="6" y="6" width="20" height="20" fill="#f5f5f5"/><text x="16" y="14" font-size="6" font-weight="700" fill="#d0109a" text-anchor="middle">DRIVE</text><path d="M8 18l10-4 7 3v6H10z" fill="#e8b90e"/><path d="M9 20h15v3H9zM13 17h8" stroke="#111" fill="#333"/></svg></button>
      <button aria-label="Chrome" class="open"><svg viewBox="0 0 32 32"><use href="#chrome"/><circle cx="23" cy="23" r="8.500" fill="#b69273"/><path d="M15 21a8.500 8.500 0 0 1 16 0z" fill="#4a4b58"/><path d="M19 23h8l-1 6h-5z" fill="#3a2d28"/></svg></button>
      <button aria-label="Code"><svg viewBox="0 0 32 32"><path d="M23 1l7 3v24l-7 3L2 12l3-3z" fill="#1f8ad2"/><path d="M23 1v30L2 20l3 3L23 9z" fill="#2ba3ee"/><path d="M22 10v12l-8-6z" fill="#e4dad6"/><path d="M2 12l3-3 8 7-8 7-3-3 4-4z" fill="#1273b8"/></svg></button>
      <button aria-label="Workbench" class="open"><svg viewBox="0 0 30 30"><use href="#wb"/></svg></button>
      <button aria-label="Fluent" class="open current"><svg viewBox="0 0 20 20"><use href="#fluent"/></svg></button>
    </div>
    <div class="tray">
      <svg class="haze" viewBox="0 0 32 32"><path d="M19 3c14 6 12 26-3 27-8 0-12-5-13-8 11 1 15-8 16-19z" fill="#f49a2c"/><path d="M7 11h21M5 15h12M19 15h8M10 20h12" stroke="#fcd76a" stroke-width="3" stroke-linecap="round"/></svg>
      <span class="weather">29°C&nbsp; Haze</span>
      <svg class="t20" viewBox="0 0 20 20"><path d="M3 14l7-8 7 8"/></svg>
      <svg class="t20" viewBox="0 0 20 20"><path d="M1 5h15v10H1zM18 8v4"/><path d="M3 7h7v6H3z" fill="#111"/></svg>
      <svg class="t20" viewBox="0 0 20 20"><path d="M1 7h3l4-4v14l-4-4H1zM11 7c2 2 2 4 0 6M14 5c3 3 3 7 0 10M17 3c4 4 4 10 0 14"/></svg>
      <svg class="t20" viewBox="0 0 20 20"><path d="M2 16C3 9 9 3 17 3M6 17c0-6 5-10 11-10M10 17c0-3 3-6 7-6"/><circle cx="15" cy="16" r="1.500" fill="#111"/></svg>
      <span class="lang">ENG</span>
      <span class="clock">18:57<br>29-08-2024</span>
      <button class="notes" aria-label="Notifications"><svg viewBox="0 0 24 24"><path d="M1 2h20v16h-9l-5 5v-5H1z" fill="#000"/><path d="M4 6h14M4 10h14M4 14h9" stroke="#e4dad6" stroke-width="1.500"/></svg><span class="badge">4</span></button>
    </div>
  </footer>
</body>
</html>
```

FILE: styles.css
```css
* {
  box-sizing: border-box;
}
body {
  margin: 0;
  height: 100vh;
  display: flex;
  flex-direction: column;
  overflow: hidden;
  background: #fff;
  color: #111;
  font-family: "DejaVu Sans Condensed", "Noto Sans", sans-serif;
  font-size: 13px;
  line-height: 17px;
}
h1, h2, h3, ul, pre {
  margin: 0;
  padding: 0;
}
h1, h2, h3 {
  font-size: 13px;
}
ul {
  list-style: none;
}
button, input, select {
  font: inherit;
  color: inherit;
}
button {
  border: 0;
  padding: 0;
  background: none;
}
svg {
  flex: none;
}
.sprite {
  display: none;
}
.i20 { width: 20px; height: 20px; }
.i30 { width: 30px; height: 30px; }
.i12 { width: 12px; height: 12px; }

/* title bar */
.titlebar {
  display: flex;
  align-items: center;
  height: 29px;
  padding-left: 2px;
  gap: 5px;
}
.titlebar h1 {
  font-family: "Noto Sans", "Open Sans", sans-serif;
  font-size: 14px;
  font-weight: 400;
  color: #999;
  white-space: nowrap;
}
.window-buttons {
  margin-left: auto;
  display: flex;
}
.window-buttons button {
  width: 58px;
}
.window-buttons svg {
  width: 14px;
  height: 14px;
  fill: none;
  stroke: #999;
}
.window-buttons button:last-child {
  margin-right: 3px;
}

.toolbar {
  display: flex;
  align-items: center;
  height: 45px;
  padding: 0 3px;
  background: linear-gradient(#fbfbfb, #efefef);
  border-bottom: 1px solid #b9b6b0;
}
.toolbar button {
  width: 39px;
  display: flex;
  justify-content: center;
}

/* menu bar */
.menu {
  display: flex;
  align-items: stretch;
  height: 35px;
  background: #34495f;
}
.menu-tab {
  display: flex;
  align-items: center;
  padding: 0 25px;
  color: #d5dbe2;
  font-weight: 700;
  text-decoration: none;
  white-space: nowrap;
}
.menu-tab:first-child {
  padding: 0 26px 0 27px;
}
.menu-tab.snug {
  padding: 0 22px;
}
.menu-tab.wide {
  padding: 0 27px;
}
.menu-tab.narrow {
  padding: 0 10px;
}
.menu-tab.active {
  background: #f9f9f9;
  color: #34495f;
}
.menu-tab u {
  text-underline-offset: 2px;
}
.collapse {
  align-self: center;
  margin-left: 12px;
  border: 5px solid transparent;
  border-top: 0;
  border-bottom-color: #c3cad3;
}
.menu-right {
  display: flex;
  margin-left: auto;
}
.search {
  display: flex;
  align-items: center;
  width: 180px;
  height: 34px;
  padding-left: 3px;
  margin-right: 30px;
  border-radius: 4px;
  background: #18222c;
}
.search svg {
  width: 17px;
  height: 17px;
  fill: none;
  stroke: #c9d0d8;
  stroke-width: 2.500;
}
.search input {
  width: 100%;
  border: 0;
  background: none;
}
.search input::placeholder {
  color: #98a0a6;
}
.menu-right > button {
  width: 38px;
  display: flex;
  align-items: center;
}
.menu-right > button:first-of-type {
  margin-left: 4px;
}
.brand {
  width: 67px;
  margin-left: 12px;
  background: #000;
}
.brand svg, .logo svg {
  font-family: Inter, Lato, sans-serif;
}

/* ribbon */
.ribbon {
  display: flex;
  height: 113px;
  padding: 4px 0 3px 5px;
  background: #f9f9f9;
}
.group {
  border-right: 1px solid #34495f;
  flex: none;
}
.group:first-child {
  border-left: 1px solid #34495f;
}
.group h2 {
  margin: 4px 0 0 -12px;
  height: 19px;
  text-align: center;
  color: #2b3440;
}
.mesh { width: 378px; padding-left: 13px; }
.zones { width: 364px; padding-left: 14px; }
.interfaces { width: 107px; padding-left: 13px; }
.mesh-models { width: 145px; padding-left: 13px; }
.turbomachinery { width: 461px; padding-left: 10px; }
.adapt { width: 220px; padding-left: 13px; }
.surface { width: 108px; padding-left: 14px; }
.cols {
  display: flex;
}
.col {
  display: flex;
  flex-direction: column;
}
.col.two {
  padding-top: 7px;
  gap: 14px;
}
.c-info { width: 78px; }
.c-scale { width: 118px; margin-left: 14px; }
.c-combine { width: 109px; padding-right: 15px; }
.c-delete { width: 112px; }
.c-append { width: 119px; }
.c-turbo { width: 131px; }
.c-perf { width: 150px; }
.c-flow { width: 146px; margin-left: 13px; }
.c-manual { width: 100px; }
.tool {
  display: flex;
  align-items: center;
  gap: 4px;
  height: 29px;
  white-space: nowrap;
}
.tool.indent {
  padding-left: 3px;
}
.tool:disabled, .tool.off {
  color: #8b8b8b;
}
.caret {
  margin-left: auto;
  border: 5px solid transparent;
  border-top-color: #666;
  border-bottom: 0;
}
.tool .caret {
  margin-top: 6px;
}
.tool .caret.low {
  margin-top: 20px;
  margin-right: 10px;
}
.tool:disabled .caret {
  border-top-color: #aaa;
}
.big-tool {
  display: flex;
  flex-direction: column;
  align-items: center;
  gap: 4px;
  width: 74px;
}
.big-tool svg {
  width: 40px;
  height: 40px;
  margin-top: 12px;
}
.big-tool .caret {
  display: inline-block;
}
.square {
  width: 16px;
  height: 16px;
  margin: 0 4px 0 0;
  appearance: none;
  border: 1px solid #bbb;
  background: #eee;
}

/* work area */
.workspace {
  position: relative;
  flex: 1;
  min-height: 0;
  display: flex;
  gap: 3px;
  padding-top: 4px;
}
.pane-head {
  display: flex;
  align-items: center;
  justify-content: space-between;
  height: 26px;
  padding: 0 3px 0 9px;
}
.pane-head h2 {
  color: #64748b;
}
.fold {
  width: 6px;
  height: 6px;
  border: 1px solid #222;
  border-width: 0 0 2px 2px;
  transform: rotate(45deg);
}
.outline {
  display: flex;
  flex-direction: column;
  width: 355px;
  background: #ebedef;
}
.strip {
  height: 27px;
  background: #f3f3f3;
  border-top: 4px solid #fbfbfb;
}
.filter {
  height: 31px;
  margin: 11px 7px 9px;
  padding: 0 16px;
  border: 0;
  border-radius: 16px;
  background: #fafafa;
}
input::placeholder {
  color: #888;
}
.tree-wrap {
  flex: 1;
  min-height: 0;
  display: grid;
  grid-template-columns: 1fr 15px;
  grid-template-rows: 1fr 15px;
  margin-right: 5px;
}
.tree {
  overflow: hidden;
}
.tree li {
  display: flex;
  align-items: center;
  height: 22px;
  white-space: nowrap;
}
.tree li.short {
  height: 18px;
}
.tree span {
  flex: 1;
  display: flex;
  align-items: center;
  gap: 6px;
  height: 100%;
  margin-left: 5px;
  padding-left: 3px;
}
.tree .selected span {
  background: #bac9db;
}
.exp {
  width: 16px;
  height: 16px;
  flex: none;
}
.l1 { padding-left: 9px; }
.l2 { padding-left: 34px; }
.l3 { padding-left: 59px; }
.l4 { padding-left: 84px; }
.l5 { padding-left: 109px; }

/* scroll bars */
.vbar, .hbar {
  display: flex;
  background: #c1c8ce;
}
.vbar {
  flex-direction: column;
}
.hbar {
  margin-left: 5px;
}
.vbar button, .hbar button {
  display: grid;
  place-items: center;
  flex: none;
  background: #9dacb5;
}
.vbar button { height: 20px; }
.hbar button { width: 20px; }
.vbar button::after, .hbar button::after {
  content: "";
  border: 5px solid transparent;
}
.up::after { border-top-width: 0 !important; border-bottom-color: #111 !important; }
.down::after { border-bottom-width: 0 !important; border-top-color: #111 !important; }
.left::after { border-left-width: 0 !important; border-right-color: #66757f !important; }
.right::after { border-right-width: 0 !important; border-left-color: #66757f !important; }
.vbar .down {
  margin-top: auto;
}
.hbar .right {
  margin-left: auto;
}
.thumb {
  background: #5b6170;
}
.track {
  flex: 1;
}
.tree-thumb { height: 50%; }
.tree-hthumb { width: 81%; }
.console-thumb { height: 20px; }
.dialog-thumb { flex: 34; }
.dialog-hthumb { flex: 15; }

/* task page */
.task {
  display: flex;
  flex-direction: column;
  width: 370px;
  background: #f3f3f3;
  border: 1px solid #bbb;
  border-top: 0;
}
.task .pane-head {
  background: #bfc3ca;
  padding-left: 8px;
}
.task-body {
  flex: 1;
  display: flex;
  flex-direction: column;
  padding: 19px 11px 36px;
}
.zone-row {
  display: flex;
  align-items: center;
  gap: 6px;
  margin: 20px 0 6px;
}
.zone-row input, .domain-id input, .coef-row input {
  flex: 1;
  height: 22px;
  padding: 0 5px;
  border: 1px solid #bcc6d6;
  border-radius: 4px;
  background: #fdfdfd;
}
.listbox {
  border: 2px solid #dedede;
  border-radius: 3px;
  background: #fff;
}
.listbox li {
  height: 17px;
  padding-left: 3px;
}
.listbox .picked {
  background: #8da2b7;
}
.zone-list {
  flex: 1;
}
.pickers {
  display: flex;
  gap: 7px;
  margin: 9px 0 11px;
}
.pickers .phase { width: 75px; }
.pickers .type { flex: 1; }
.drop {
  position: relative;
  display: block;
}
.drop::after {
  content: "";
  position: absolute;
  right: 8px;
  top: 8px;
  border: 5px solid transparent;
  border-top: 6px solid #111;
  border-bottom: 0;
}
.drop select {
  width: 100%;
  height: 23px;
  padding: 0 5px;
  appearance: none;
  border: 1px solid #bcc6d6;
  border-radius: 4px;
  background: #fdfdfd;
}
.task-buttons {
  display: flex;
  gap: 17px;
  height: 147px;
  padding-left: 8px;
}
.btn {
  height: 27px;
  border: 1px solid #4c5b6c;
  border-radius: 4px;
  background: #fafafa;
  white-space: nowrap;
}
.task .btn {
  background: #f5f5f5;
}
.task .btn:disabled {
  border-color: #c3c5c9;
  background: #d5d6da;
  color: #888;
}
.btn-left {
  display: flex;
  flex-direction: column;
  gap: 4px;
  width: 94px;
}
.btn-right {
  display: flex;
  flex-direction: column;
  align-items: flex-start;
  justify-content: flex-end;
  gap: 11px;
}
.btn-right .btn {
  padding: 0 3px;
}

/* graphics view */
.right {
  flex: 1;
  min-width: 0;
  display: flex;
  flex-direction: column;
}
.view {
  flex: 1;
  display: flex;
  min-height: 0;
}
.view-tools {
  width: 53px;
  padding: 6px;
}
.grip {
  width: 17px;
  height: 5px;
  margin: 0 auto 6px;
  background: radial-gradient(#bbb 1px, transparent 1px) 0 0 / 3px 4px;
}
.view-tools button {
  width: 39px;
  height: 24px;
  border: 3px solid #8f9ca6;
  border-radius: 4px;
  background: #f6f6f6;
}
.canvas {
  position: relative;
  flex: 1;
  padding-left: 6px;
  border-top: 1px solid #2b3440;
  background: linear-gradient(#cbd2e3, #fff 96%);
  clip-path: polygon(8px 0, calc(100% - 12px) 0, calc(100% - 9px) 3px, 100% 28px, 100% 100%, 0 100%, 0 26px);
}
.corner-left, .corner-right {
  position: absolute;
  top: -1px;
  height: 28px;
  fill: none;
  stroke: #2b3440;
}
.corner-left { left: 0; width: 12px; }
.corner-right { right: 0; width: 14px; }
.canvas header {
  display: grid;
  grid-template-columns: 1fr auto 1fr;
  align-items: center;
  height: 29px;
  padding: 0 12px 0 4px;
}
.canvas header h2 {
  color: #2b3440;
}
.canvas header button {
  justify-self: end;
}
.canvas header button svg {
  width: 12px;
  height: 12px;
  stroke: #111;
  stroke-width: 1.500;
}
.plot {
  width: 247px;
  margin: 2px auto 0;
}
.ticks {
  height: 10px;
  background: repeating-linear-gradient(to left, #f33 0 2px, transparent 2px 12px);
  border-bottom: 1px solid #f00;
}
.mesh-body {
  display: block;
  width: 247px;
  height: 506px;
}
.logo {
  position: absolute;
  right: 7px;
  top: 35px;
  display: flex;
  flex-direction: column;
  align-items: flex-end;
  width: 98px;
  color: #000;
  font-family: Inter, Lato, sans-serif;
  font-size: 15px;
  line-height: 18px;
}
.logo svg {
  width: 98px;
  height: 32px;
}
.logo em {
  align-self: stretch;
  margin-top: 2px;
  padding-top: 4px;
  border-top: 1px solid #555;
  font-size: 16px;
  font-style: normal;
  font-weight: 700;
  text-align: center;
}
.selected-row {
  display: flex;
  align-items: center;
  justify-content: flex-end;
  gap: 2px;
  height: 38px;
  padding-right: 4px;
}
.selected-row .drop {
  width: 168px;
}
.console-head {
  display: flex;
  align-items: center;
  justify-content: flex-end;
  gap: 7px;
  height: 27px;
  padding-right: 3px;
  background: #bfc3cb;
}
.console-head svg {
  width: 12px;
  height: 12px;
  fill: none;
  stroke: #555;
}
.console {
  display: flex;
  align-items: flex-end;
  height: 180px;
  border-left: 1px solid #bfc3cb;
  border-bottom: 6px solid #bfc3cb;
  background: #f6f6f6;
}
.console pre {
  flex: 1;
  padding: 0 0 15px 7px;
  font-family: "Liberation Mono", monospace;
  font-size: 13px;
  line-height: 16px;
}
.console-buttons {
  align-self: flex-start;
  display: flex;
  gap: 6px;
}
.console-buttons button {
  display: grid;
  place-items: center;
  width: 32px;
  height: 27px;
  border: 1px solid #bbb;
  border-radius: 3px;
  background: #fbfbfb;
}
.console-buttons svg {
  width: 18px;
  height: 20px;
}
.console-side {
  align-self: stretch;
  display: flex;
  flex-direction: column;
  width: 16px;
}
.console-side .vbar {
  flex: 1;
}
.tick {
  width: 16px;
  height: 14px;
  background: #fff;
  fill: none;
  stroke: #111;
  stroke-width: 2;
}

/* multiphase dialog */
.dialog {
  position: absolute;
  left: 494px;
  top: 26px;
  display: flex;
  flex-direction: column;
  width: 863px;
  height: 647px;
  border: 1px solid #d6d6d6;
  border-top-color: #fff;
  background: #fdfdfd;
  box-shadow: 0 6px 20px rgba(0, 0, 0, 0.4);
}
.dialog > header {
  display: flex;
  align-items: center;
  gap: 5px;
  height: 36px;
  padding: 0 14px 0 8px;
  background: #fff;
}
.dialog > header h2 {
  flex: 1;
  font-family: "Noto Sans", "Open Sans", sans-serif;
  font-size: 14px;
  font-weight: 400;
}
.dialog > header button svg {
  width: 14px;
  height: 14px;
  stroke: #000;
}
.dialog-scroll {
  flex: 1;
  min-height: 0;
  display: grid;
  grid-template-columns: minmax(0, 1fr) 15px;
  grid-template-rows: minmax(0, 1fr) 15px;
  margin: 4px 4px 4px 3px;
}
.dialog-scroll .hbar {
  margin-left: 0;
}
.viewport {
  overflow: hidden;
}
.tabs {
  display: flex;
  align-items: flex-end;
  height: 30px;
  border-bottom: 1px solid #b5b5b5;
}
.tabs button {
  height: 27px;
  padding: 0 14px;
  margin-right: -1px;
  border: 1px solid #b5b5b5;
  border-bottom: 0;
  border-radius: 3px 3px 0 0;
  background: #dcdcdc;
  white-space: nowrap;
}
.tabs button.on {
  height: 30px;
  margin-bottom: -1px;
  background: #fbfbfb;
}
.tabs button:disabled {
  color: #8b8b8b;
}
.pane {
  margin-top: 8px;
  padding: 8px 0 0 4px;
  background: #f9f9f9;
}
.frame {
  height: 465px;
  padding: 4px 0 0 4px;
  border: 1px solid #cdd3e3;
  border-right: 0;
}
.split {
  display: flex;
  gap: 7px;
  padding: 13px 0 0 4px;
}
.dialog h3 {
  height: 16px;
  line-height: 16px;
  color: #3a4454;
}
.left-col {
  width: 334px;
}
.right-col {
  flex: 1;
}
.box {
  border: 1px solid #cdd3e3;
}
.pairs {
  padding: 25px 4px 4px;
  margin-bottom: 7px;
}
.pairs .listbox {
  height: 220px;
}
.options {
  padding: 12px 4px 4px;
}
.check {
  display: flex;
  align-items: center;
  gap: 7px;
}
.box-input {
  display: grid;
  place-items: center;
  width: 17px;
  height: 17px;
  margin: 0;
  appearance: none;
  border: 1px solid #b9b9b9;
  background: #fff;
}
.box-input:checked::after {
  content: "";
  width: 6px;
  height: 11px;
  margin-top: -3px;
  border: solid #111;
  border-width: 0 2px 2px 0;
  transform: rotate(40deg);
}
.options > .check {
  margin: 1px 0 10px 2px;
}
.option-groups {
  display: flex;
  gap: 7px;
}
.option-group {
  width: 192px;
}
.radios {
  display: flex;
  flex-direction: column;
  gap: 5px;
  padding: 5px 0 8px 9px;
}
.radios label {
  display: flex;
  align-items: center;
  gap: 7px;
  height: 16px;
  white-space: nowrap;
}
.radios input {
  width: 16px;
  height: 16px;
  margin: 0;
  appearance: none;
  border: 1px solid #aaa;
  border-radius: 50%;
  background: #fff;
}
.radios input:checked {
  background: radial-gradient(#444 4px, #fff 5px);
}
.option-groups > div:last-child {
  flex: 1;
}
.adhesion {
  display: flex;
  flex-direction: column;
  gap: 8px;
  padding: 5px 6px;
  white-space: nowrap;
}
.force, .coef {
  border-right: 0;
  padding: 4px 0 4px 4px;
}
.coef label {
  display: block;
  height: 20px;
}
.coef-row {
  display: flex;
  gap: 3px;
}
.coef-row .drop {
  width: 384px;
}
.coef-row input {
  min-width: 0;
  height: 24px;
  margin-right: -6px;
}
.domain-id {
  display: flex;
  align-items: center;
  gap: 1px;
  padding-top: 6px;
}
.domain-id input {
  flex: none;
  width: 42px;
}
.dialog > footer {
  position: relative;
  display: flex;
  justify-content: center;
  gap: 8px;
  height: 56px;
  margin: 0 4px 0 3px;
  padding-top: 13px;
  border-top: 1px solid #999;
}
.dialog .btn {
  padding: 0 6px;
  font-weight: 700;
  color: #34425a;
}
.dialog .btn.primary {
  background: #4f5b6b;
  color: #fff;
}
.resize {
  position: absolute;
  right: -4px;
  bottom: 0;
  width: 14px;
  height: 14px;
  stroke: #aaa;
}

/* taskbar */
.taskbar {
  display: flex;
  height: 50px;
  background: #e4dad6;
  font-family: "Open Sans", "Noto Sans", sans-serif;
}
.apps {
  display: flex;
}
.apps button {
  position: relative;
  display: grid;
  place-items: center;
  width: 62px;
  height: 50px;
}
.apps.system button {
  width: 60px;
}
.apps.system {
  margin-right: 3px;
}
.apps svg {
  width: 30px;
  height: 30px;
}
.apps .open::after {
  content: "";
  position: absolute;
  left: 5px;
  right: 5px;
  bottom: 0;
  height: 3px;
  background: #0078d7;
}
.apps .current {
  background: #f4f0ee;
}
.apps .current::after {
  left: 0;
  right: 0;
}
.badge {
  position: absolute;
  right: 4px;
  bottom: 5px;
  width: 20px;
  height: 20px;
  border: 1px solid #888;
  border-radius: 50%;
  background: #d3d0ce;
  font-size: 14px;
  line-height: 18px;
  text-align: center;
}
.tray {
  display: flex;
  align-items: center;
  gap: 10px;
  margin-left: auto;
}
.haze {
  width: 32px;
  height: 32px;
}
.weather {
  margin: 0 20px 0 -2px;
  font-size: 17px;
}
.t20 {
  width: 20px;
  height: 20px;
  fill: none;
  stroke: #111;
  stroke-width: 1.300;
}
.lang {
  margin-left: 3px;
  font-size: 14px;
}
.clock {
  margin-left: 6px;
  font-size: 14px;
  line-height: 23px;
  text-align: center;
}
.tray .notes {
  position: relative;
  width: 44px;
  height: 50px;
  margin: 0 17px 0 5px;
  padding-top: 4px;
}
.notes svg {
  width: 24px;
  height: 24px;
}
.notes .badge {
  right: 2px;
}
```
